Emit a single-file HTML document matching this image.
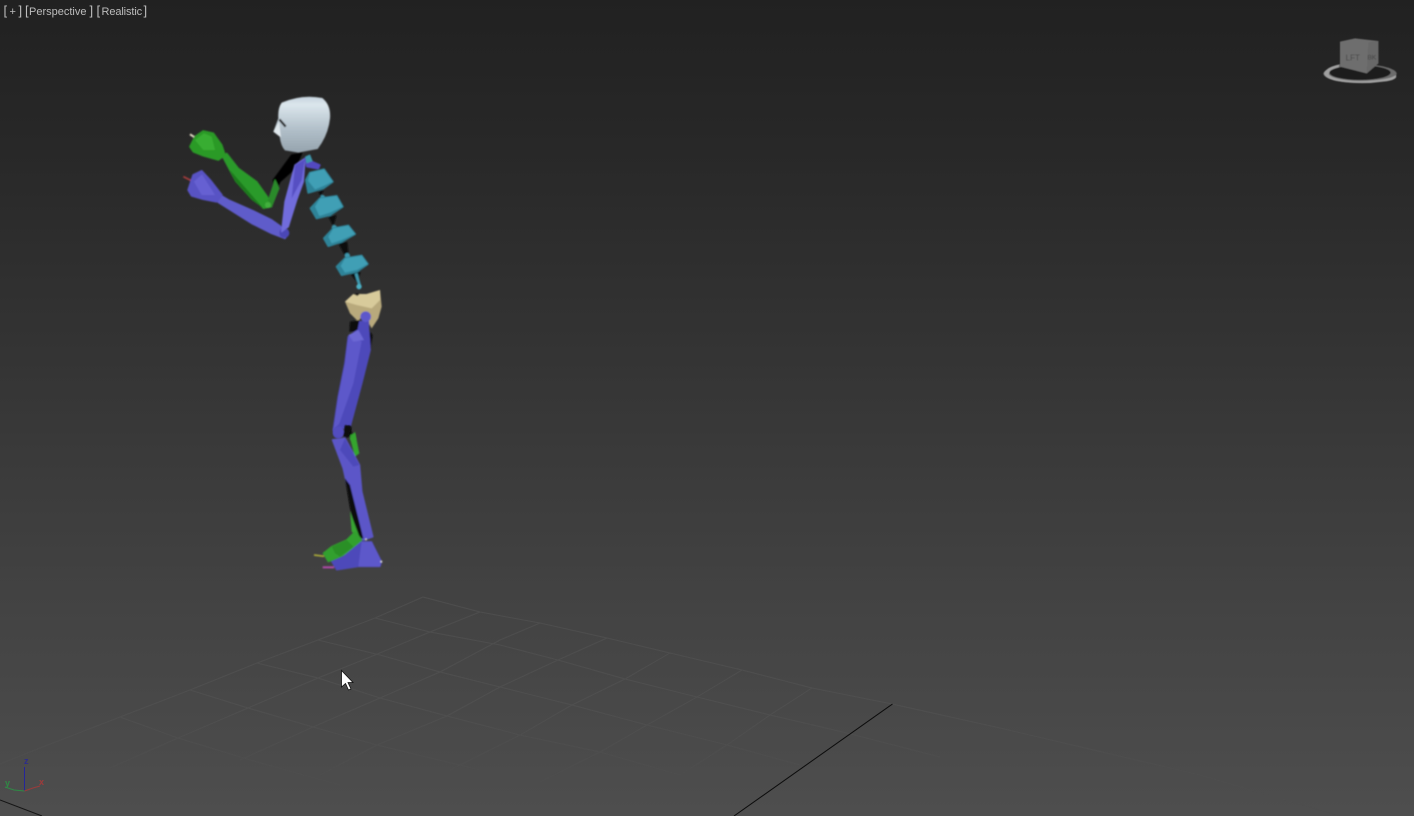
<!DOCTYPE html>
<html><head><meta charset="utf-8"><title>Perspective viewport</title>
<style>
html,body{margin:0;padding:0;width:1414px;height:816px;overflow:hidden;background:#333}
#v{position:relative;width:1414px;height:816px;overflow:hidden;background:linear-gradient(180deg,#212121 0,#282828 150px,#333 340px,#424242 590px,#4e4e4e 816px)}
svg{position:absolute;left:0;top:0}
.l{position:absolute;top:5px;font:11px/14px "Liberation Sans",sans-serif;color:#bdbdbd;white-space:pre}
.br{font-size:13px;top:4px}
</style></head><body><div id="v">
<div class="l br" style="left:3.5px">[</div>
<div class="l" style="left:9.5px">+</div>
<div class="l br" style="left:18.5px">]</div>
<div class="l br" style="left:25px">[</div>
<div class="l" style="left:29px">Perspective</div>
<div class="l br" style="left:89.5px">]</div>
<div class="l br" style="left:96.5px">[</div>
<div class="l" style="left:101.5px;letter-spacing:-.01em">Realistic</div>
<div class="l br" style="left:143.5px">]</div>
<svg width="1414" height="816" viewBox="0 0 1414 816">
<defs>
<linearGradient id="g" gradientUnits="userSpaceOnUse" x1="0" y1="597" x2="0" y2="790"><stop offset="0" stop-color="#4d4d4d"/><stop offset=".55" stop-color="#4f4f4f"/><stop offset="1" stop-color="#4d4d4d"/></linearGradient>
<linearGradient id="hd" x1="0" y1="0" x2="0" y2="1"><stop offset="0" stop-color="#c6d4de"/><stop offset=".14" stop-color="#dbe6ec"/><stop offset=".6" stop-color="#b0bec8"/><stop offset="1" stop-color="#95a3ad"/></linearGradient>
<filter id="b" x="-10%" y="-10%" width="120%" height="120%"><feGaussianBlur stdDeviation="2.2"/></filter>
<filter id="b2" x="-10%" y="-10%" width="120%" height="120%"><feGaussianBlur stdDeviation="1.8"/></filter>
<filter id="b3" x="-5%" y="-5%" width="110%" height="110%"><feGaussianBlur stdDeviation=".35"/></filter>
</defs>
<g fill="none" stroke="url(#g)" stroke-width="1" filter="url(#b3)">
<polyline points="423,597 375,618 318,640 257,663 190,690 120,717 40,748 0,764"/>
<polyline points="423,597 480,612 540,623 607,638 670,653 742,670 812,688 892,704 1000,728 1200,775 1340,816"/>
<polyline points="375,618 430,632 500,645 558,660 625,679 697,697 770,715 847,733 940,757"/>
<polyline points="318,640 380,655 440,672 500,687 572,705 647,725 727,745 800,765"/>
<polyline points="257,663 318,678 380,698 447,716 520,735 600,752 680,775"/>
<polyline points="190,690 248,708 313,727 377,745 480,770"/>
<polyline points="120,717 178,738 257,762 340,785"/>
<polyline points="480,612 430,632 375,655 318,678 248,708 178,738 110,768"/>
<polyline points="540,623 500,640 440,672 380,698 313,727 240,760"/>
<polyline points="607,638 558,660 500,687 447,716 377,745 320,775"/>
<polyline points="670,653 625,679 572,705 520,735 450,770"/>
<polyline points="742,670 697,697 647,725 600,752 540,782"/>
<polyline points="812,688 770,715 727,745 680,775"/>
</g>
<line x1="892.5" y1="704" x2="734" y2="816" stroke="#0c0c0c" stroke-width="1"/>
<line x1="0" y1="800" x2="42" y2="816" stroke="#151515" stroke-width="1"/>

<!-- arms -->
<g transform="translate(180 125) scale(.33333)" filter="url(#b)" stroke-linejoin="round">
<path d="M30 28L46 38" stroke="#e6e0c8" stroke-width="6"/>
<path d="M10 155L36 168" stroke="#a83c3c" stroke-width="5"/>
<path d="M280 165L335 90L365 85L345 130L300 170L285 200Z" fill="#050505" stroke="#050505" stroke-width="4"/>
<path d="M205 205L230 215L225 225Z" fill="#111"/>
<path d="M128 95L140 85L175 130L230 170L262 215L275 245L250 250L215 215L165 165Z" fill="#2c9a2a" stroke="#2c9a2a" stroke-width="4"/>
<path d="M150 135L215 210L250 250L215 225L165 170Z" fill="#1e7a1e"/>
<path d="M265 225L285 165L297 190L275 245Z" fill="#2a8a2a" stroke="#2a8a2a" stroke-width="3"/>
<path d="M30 65L45 35L70 18L100 25L125 60L135 90L115 105L70 92L40 80Z" fill="#2a9a28" stroke="#2a9a28" stroke-width="5"/>
<path d="M45 45L72 25L95 35L105 75L70 75Z" fill="#38ad32"/>
<circle cx="264" cy="240" r="9" fill="#42b03c"/>
<path d="M120 210L145 225L220 258L275 285L310 310L325 325L315 340L275 325L215 295L115 232Z" fill="#5f5bca" stroke="#5f5bca" stroke-width="5"/>
<path d="M25 195L40 150L65 138L90 165L125 210L110 230L70 222L35 212Z" fill="#5853c4" stroke="#5853c4" stroke-width="6"/>
<path d="M42 170L66 148L105 210L65 210Z" fill="#6661d2"/>
<circle cx="313" cy="324" r="15" fill="#4c46b6"/>
</g>

<!-- torso + spine + head -->
<g transform="translate(170 85) scale(.33333)" filter="url(#b)" stroke-linejoin="round">
<path d="M335 440L345 350L375 240L405 220L400 290L380 345L355 425Z" fill="#716cdc" stroke="#716cdc" stroke-width="4"/>
<path d="M375 240L405 222L395 285L365 340Z" fill="#5650c2"/>
<path d="M405 220L450 240L445 252L410 245Z" fill="#524ac0" stroke="#524ac0" stroke-width="4"/>
<path d="M405 215L420 208L428 228L410 235Z" fill="#3d97ad"/>
</g>
<g transform="translate(300 160) scale(.33333)" filter="url(#b)" stroke-linejoin="round">
<g fill="#0c0c0c">
<path d="M55 95L72 90L62 110Z"/>
<path d="M85 170L110 165L100 200Z"/>
<path d="M115 250L142 245L146 288L135 288Z"/>
<path d="M150 340L182 335L172 368Z"/>
</g>
<path d="M168 340L180 380" stroke="#3d97ad" stroke-width="9"/>
<circle cx="177" cy="380" r="8" fill="#4bb0c4"/>
<circle cx="68" cy="112" r="7" fill="#3d97ad"/>
<circle cx="103" cy="203" r="8" fill="#3d97ad"/>
<circle cx="142" cy="287" r="8" fill="#3d97ad"/>
<g fill="#2f8398" stroke="#2f8398" stroke-width="6">
<path d="M18 60L30 38L72 28L98 65L70 85L25 98Z"/>
<path d="M32 145L60 115L110 108L128 140L90 165L50 175Z"/>
<path d="M72 235L100 205L145 197L165 222L125 245L85 258Z"/>
<path d="M110 320L135 295L185 287L203 312L170 335L125 345Z"/>
</g>
<g fill="#3f9fb5">
<path d="M30 38L72 28L98 65L70 78L45 88L24 62Z"/>
<path d="M60 115L110 108L128 140L90 158L58 168L45 140Z"/>
<path d="M100 205L145 197L165 222L125 240L95 250L85 230Z"/>
<path d="M135 295L185 287L203 312L170 330L135 338L122 318Z"/>
</g>
</g>
<g transform="translate(265 90) scale(.33333)" filter="url(#b)">
<path d="M50 38Q110 12 172 24Q198 45 195 85Q190 135 158 177L100 188L60 181Q48 170 44 140L25 125L40 85Q38 55 50 38Z" fill="url(#hd)"/>
<path d="M43 88L62 110" stroke="#222" stroke-width="7"/>
<path d="M25 125L42 95L48 142Z" fill="#e0e8ec"/>
</g>

<!-- thigh + pelvis -->
<g transform="translate(300 280) scale(.33333)" filter="url(#b)" stroke-linejoin="round">
<path d="M135 65L160 42L200 42L240 30L245 80L235 115L215 145L190 100L175 125L150 100Z" fill="#b8a97c"/>
<path d="M135 65L160 42L200 42L240 30L240 60L215 85L170 75Z" fill="#d8cb9b"/>
<path d="M160 42L182 40L172 48Z" fill="#111"/>
<path d="M150 125L178 120L175 155L148 155Z" fill="#0a0a0a"/>
<path d="M205 150L218 165L212 205L202 200Z" fill="#0a0a0a"/>
<path d="M145 170L175 150L180 125L205 125L205 145L210 210L185 310L150 440L100 450L115 350L135 250Z" fill="#4e49ba" stroke="#4e49ba" stroke-width="5"/>
<path d="M145 170L185 185L160 310L118 430L100 450L115 350L135 250Z" fill="#5d58ca"/>
<path d="M145 165L175 150L192 180L160 185Z" fill="#6c67d4"/>
<circle cx="197" cy="110" r="16" fill="#5d58ca"/>
<path d="M135 440L150 435L158 465L135 475Z" fill="#0a0a0a"/>
<circle cx="115" cy="460" r="16" fill="#4e49ba"/>
<path d="M150 465L165 460L168 480L152 480Z" fill="#2f9b2c"/>
</g>

<!-- shin + foot -->
<g transform="translate(300 425) scale(.33333)" filter="url(#b)" stroke-linejoin="round">
<path d="M135 0L155 5L145 35L130 35Z" fill="#0a0a0a"/>
<path d="M150 40L165 20L178 85L165 95Z" fill="#35a52f"/>
<path d="M98 45L135 40L178 120L185 200L218 335L190 345L150 220L130 130Z" fill="#5b56c8" stroke="#5b56c8" stroke-width="5"/>
<path d="M135 40L178 120L160 125L120 75Z" fill="#4e49ba"/>
<circle cx="115" cy="20" r="16" fill="#534ec0"/>
<path d="M135 160L150 180L190 340L175 340L150 250Z" fill="#070707"/>
<path d="M150 260L180 340L155 320Z" fill="#37a531"/>
<path d="M42 390L72 394" stroke="#a8a838" stroke-width="5"/>
<path d="M68 427L102 427" stroke="#b04aa8" stroke-width="6"/>
<path d="M70 385L95 365L140 345L165 320L185 345L160 375L120 395L85 410Z" fill="#33a02d" stroke="#33a02d" stroke-width="4"/>
<path d="M95 365L140 345L160 365L120 395L105 385Z" fill="#2a8f28"/>
<path d="M95 410L130 395L185 350L215 350L245 410L240 425L175 425L110 435Z" fill="#4e49ba" stroke="#4e49ba" stroke-width="3"/>
<path d="M185 350L215 350L245 410L240 425L175 425Z" fill="#5d58ca"/>
<circle cx="244" cy="410" r="3" fill="#ddd"/>
<circle cx="198" cy="343" r="3" fill="#ccc"/>
</g>

<!-- cursor -->
<path d="M341.5 670.5V687L345.5 683.5L348.5 690L351 689L348 682.5H353Z" fill="#fff" stroke="#111" stroke-width=".8"/>

<!-- viewcube -->
<g transform="translate(1310 25) scale(.33333)" filter="url(#b2)">
<ellipse cx="150" cy="146" rx="110" ry="28" fill="#6c6c6c"/>
<path d="M42 145Q50 125 90 118L85 128Q60 135 56 148Q70 165 150 168Q240 165 258 150Q265 165 220 170Q150 180 80 168Q45 160 42 145Z" fill="#a0a0a0"/>
<ellipse cx="150" cy="143" rx="92" ry="22" fill="#1e1e1e"/>
<path d="M90 50L135 40L205 48L205 115L170 145L90 125Z" fill="#6e6e6e"/>
<path d="M175 52L205 48V115L170 145Z" fill="#686868"/>
<text x="107" y="106" font-family="Liberation Sans, sans-serif" font-size="24" fill="#484848">LFT</text>
<text x="172" y="104" font-family="Liberation Sans, sans-serif" font-size="20" fill="#444">BK</text>
</g>

<!-- axis tripod -->
<line x1="24.5" y1="767" x2="24.5" y2="791" stroke="#25259a" stroke-width="1"/>
<polyline points="24.5,791 14,790 5,787" fill="none" stroke="#2f8a45" stroke-width="1"/>
<polyline points="24.5,791 33,788 40,786" fill="none" stroke="#9a3b3b" stroke-width="1"/>
<text x="24" y="764" font-family="Liberation Sans, sans-serif" font-size="9" font-weight="bold" fill="#2c2c8c">z</text>
<text x="5" y="786" font-family="Liberation Sans, sans-serif" font-size="9" font-weight="bold" fill="#2f8a45">y</text>
<text x="39" y="785" font-family="Liberation Sans, sans-serif" font-size="9" font-weight="bold" fill="#a03a3a">x</text>
</svg>
</div></body></html>
